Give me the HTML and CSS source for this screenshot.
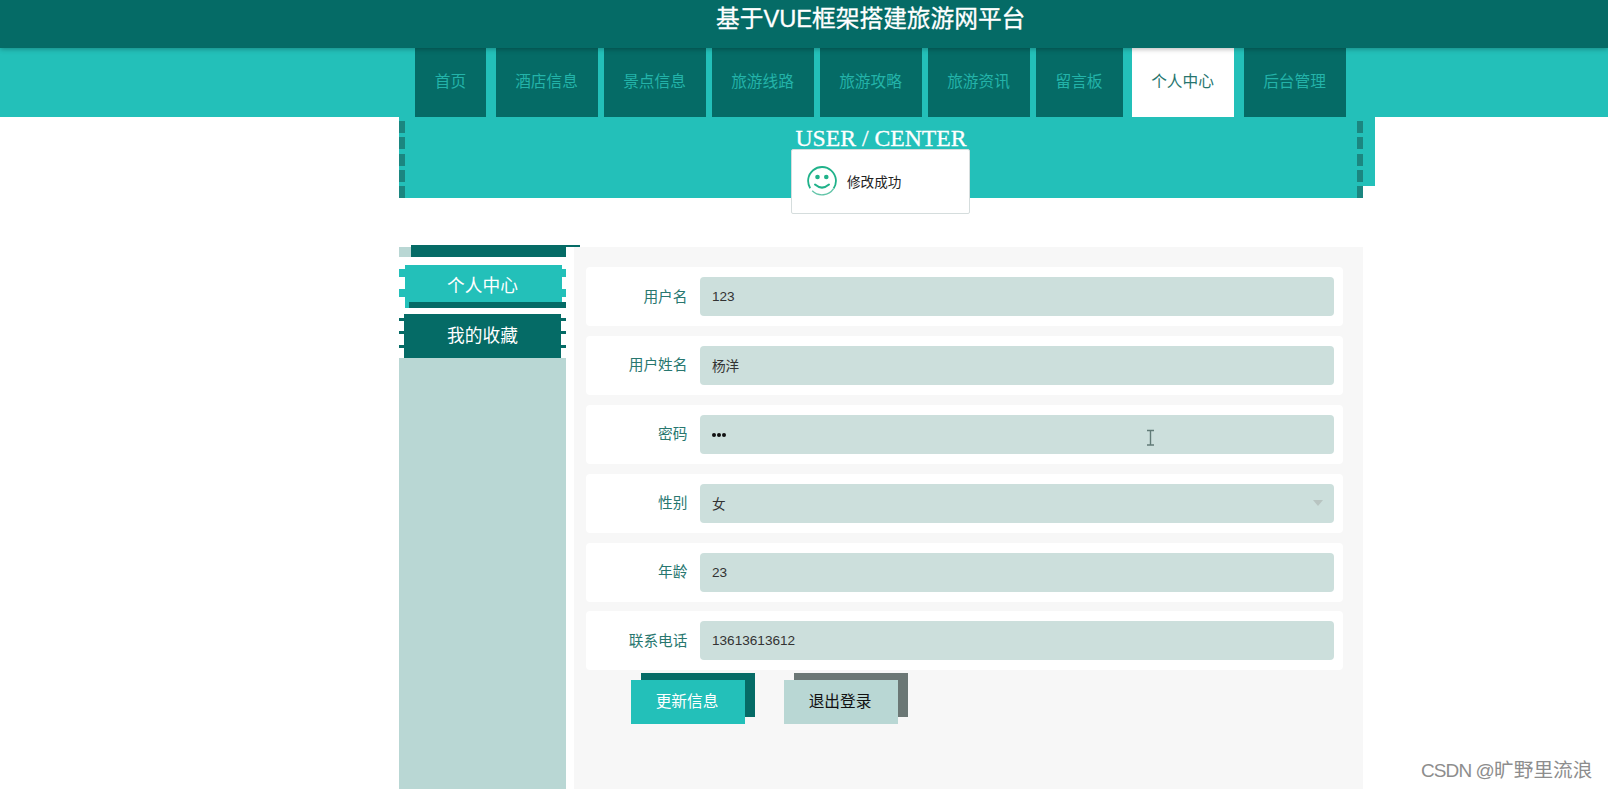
FILE: index.html
```html
<!DOCTYPE html>
<html lang="zh">
<head>
<meta charset="utf-8">
<title>基于VUE框架搭建旅游网平台</title>
<link rel="stylesheet" href="styles.css">
</head>
<body>
<header class="header"><h1>基于VUE框架搭建旅游网平台</h1></header>
<nav class="nav">
  <a class="home">首页</a><a>酒店信息</a><a>景点信息</a><a>旅游线路</a><a>旅游攻略</a><a>旅游资讯</a><a>留言板</a><a class="active">个人中心</a><a>后台管理</a>
</nav>
<div class="container">
  <div class="banner">
    <i class="dashes"></i><h2>USER / CENTER</h2><i class="dashes"></i>
    <div class="toast">
      <svg width="30" height="30" viewBox="0 0 30 30" fill="none" stroke="#20b28a">
        <path d="M3.2 22.2A13.9 13.9 0 1 1 26.6 22.6" stroke-width="1.8"/>
        <path d="M26.6 22.6A13.9 13.9 0 0 1 5.2 24.8" stroke-width="1.4" stroke="#63c5a9"/>
        <circle cx="10.5" cy="11" r="2.3" fill="#20b28a" stroke="none"/>
        <circle cx="19.3" cy="11" r="2.3" fill="#20b28a" stroke="none"/>
        <path d="M8 18.6Q15 24.6 22 18.6" stroke-width="2" stroke-linecap="round"/>
      </svg>
      <span>修改成功</span>
    </div>
  </div>
  <main class="main">
    <aside class="side">
      <div class="side-top"></div>
      <a class="side-item current"><span>个人中心</span></a>
      <a class="side-item other"><span>我的收藏</span></a>
      <div class="side-fill"></div>
    </aside>
    <section class="panel">
      <div class="row"><label>用户名</label><div class="field">123</div></div>
      <div class="row"><label>用户姓名</label><div class="field">杨洋</div></div>
      <div class="row"><label>密码</label><div class="field password"><i></i><i></i><i></i></div></div>
      <div class="row"><label>性别</label><div class="field select">女</div></div>
      <div class="row"><label>年龄</label><div class="field">23</div></div>
      <div class="row"><label>联系电话</label><div class="field">13613613612</div></div>
      <div class="buttons"><button class="update">更新信息</button><button class="logout">退出登录</button></div>
    </section>
  </main>
</div>
<svg class="cursor" width="9" height="18" viewBox="0 0 9 18" fill="none" stroke="#617b77" stroke-width="1.4"><path d="M1 1.5H8M1 16H8M4.5 1.5V16"/></svg>
<div class="watermark"><span>CSDN @</span>旷野里流浪</div>
</body>
</html>
```
FILE: styles.css
```css
* { box-sizing: border-box; }
body {
  margin: 0;
  height: 789px;
  overflow: hidden;
  background: #fff;
  font-family: "Liberation Sans", "Noto Sans CJK SC", sans-serif;
}
.header {
  position: relative;
  z-index: 2;
  height: 48px;
  padding-left: 716px;
  background: #056b66;
  box-shadow: 0 1px 5px rgba(0, 0, 0, .3);
}
.header h1 {
  margin: 0;
  font-size: 23.7px;
  font-weight: 400;
  line-height: 38px;
  color: #fff;
  white-space: nowrap;
  -webkit-text-stroke: .3px #fff;
}
.nav {
  position: relative;
  z-index: 1;
  display: flex;
  gap: 6px;
  height: 69px;
  padding-left: 415px;
  background: #23c0b9;
}
.nav a {
  flex: none;
  width: 102px;
  background: #056b66;
  color: #23b3a9;
  font-size: 15.7px;
  line-height: 68px;
  text-align: center;
}
.nav .home { width: 71px; margin-right: 3.5px; }
.nav a:nth-child(7) { width: 87px; }
.nav .active { margin: 0 4px 0 3px; background: #fff; color: #27756e; }
.container { width: 964px; margin-left: 399px; }
.banner {
  position: relative;
  display: flex;
  justify-content: space-between;
  height: 81px;
  background: #23c0b9;
  box-shadow: 12px -12px #23c0b9;
}
.dashes {
  width: 6px;
  margin-top: 4px;
  background: repeating-linear-gradient(#1b8680 0 12px, transparent 12px 16.3px);
}
.banner h2 {
  margin: 7px 0 0;
  font: 400 23.7px/28px "Liberation Serif", serif;
  color: #fff;
  -webkit-text-stroke: .3px #fff;
}
.toast {
  position: absolute;
  left: 392px;
  top: 32px;
  display: flex;
  align-items: center;
  gap: 10px;
  width: 179px;
  height: 65px;
  padding: 0 0 2px 15px;
  background: #fff;
  border: 1px solid #d5dddd;
  border-radius: 2px;
  font-size: 13.6px;
  color: #222;
}
.main { display: flex; height: 544px; margin-top: 47px; }
.side { display: flex; flex-direction: column; width: 167px; }
.side-top {
  height: 12px;
  width: 181px;
  background:
    linear-gradient(#056b66, #056b66) 12px 0 / 169px 2px no-repeat,
    linear-gradient(#056b66, #056b66) 12px 0 / 155px 12px no-repeat,
    linear-gradient(#b9d7d4, #b9d7d4) 0 2px / 12px 10px no-repeat;
}
.side-item {
  color: #fff;
  font-size: 17.7px;
  text-align: center;
}
.current {
  height: 43px;
  margin-top: 8px;
  line-height: 43px;
  background:
    linear-gradient(#056b66, #056b66) 10px 37px / 157px 6px no-repeat,
    linear-gradient(#23c0b9, #23c0b9) 6px 0 / 157px 43px no-repeat,
    linear-gradient(#23c0b9, #23c0b9) 0 4px / 167px 8px no-repeat,
    linear-gradient(#23c0b9, #23c0b9) 0 24px / 167px 8px no-repeat;
}
.other {
  height: 44px;
  margin-top: 6px;
  line-height: 44px;
  background:
    linear-gradient(#056b66, #056b66) 5px 0 / 157px 44px no-repeat,
    linear-gradient(#056b66, #056b66) 0 4px / 167px 3px no-repeat,
    linear-gradient(#056b66, #056b66) 0 17px / 167px 3px no-repeat,
    linear-gradient(#056b66, #056b66) 0 31px / 167px 3px no-repeat;
}
.side-fill { flex: 1; background: #b9d7d4; }
.panel {
  width: 789px;
  margin: 2px 0 0 8px;
  padding: 20px 20px 0 12px;
  background: #f7f7f7;
}
.row {
  display: flex;
  align-items: center;
  height: 59px;
  margin-bottom: 9.9px;
  padding-right: 9px;
  background: #fff;
  border-radius: 4px;
}
.row label {
  width: 101.5px;
  margin-right: 12.5px;
  padding-bottom: 3px;
  font-size: 14.7px;
  text-align: right;
  color: #28776f;
}
.field {
  display: flex;
  align-items: center;
  flex: 1;
  height: 39px;
  padding-left: 12px;
  background: #ccdfdc;
  border-radius: 4px;
  font-size: 13.6px;
  color: #333;
}
.password { gap: 1px; }
.password i { width: 4px; height: 4px; margin-top: 1px; border-radius: 50%; background: #111; }
.select { justify-content: space-between; padding-right: 11px; }
.select::after {
  content: "";
  border: solid transparent;
  border-width: 6px 5.5px 0;
  border-top-color: #b8c4c1;
}
.buttons { display: flex; gap: 39px; padding: 0 0 0 45px; }
.buttons button {
  width: 114px;
  height: 44px;
  padding: 0 2px 3px 0;
  border: 0;
  font: 15.7px "Liberation Sans", "Noto Sans CJK SC", sans-serif;
}
.update { background: #23c0b9; color: #fff; box-shadow: 10px -7px #056b66; }
.logout { background: #b9d7d4; color: #111; box-shadow: 10px -7px #6b7775; }
.cursor { position: absolute; left: 1146px; top: 429px; }
.watermark {
  position: absolute;
  left: 1421px;
  top: 755px;
  font-size: 19.7px;
  line-height: 30px;
  color: #8d8d8d;
  white-space: nowrap;
}
.watermark span { font-size: 19px; letter-spacing: -.9px; }
```
